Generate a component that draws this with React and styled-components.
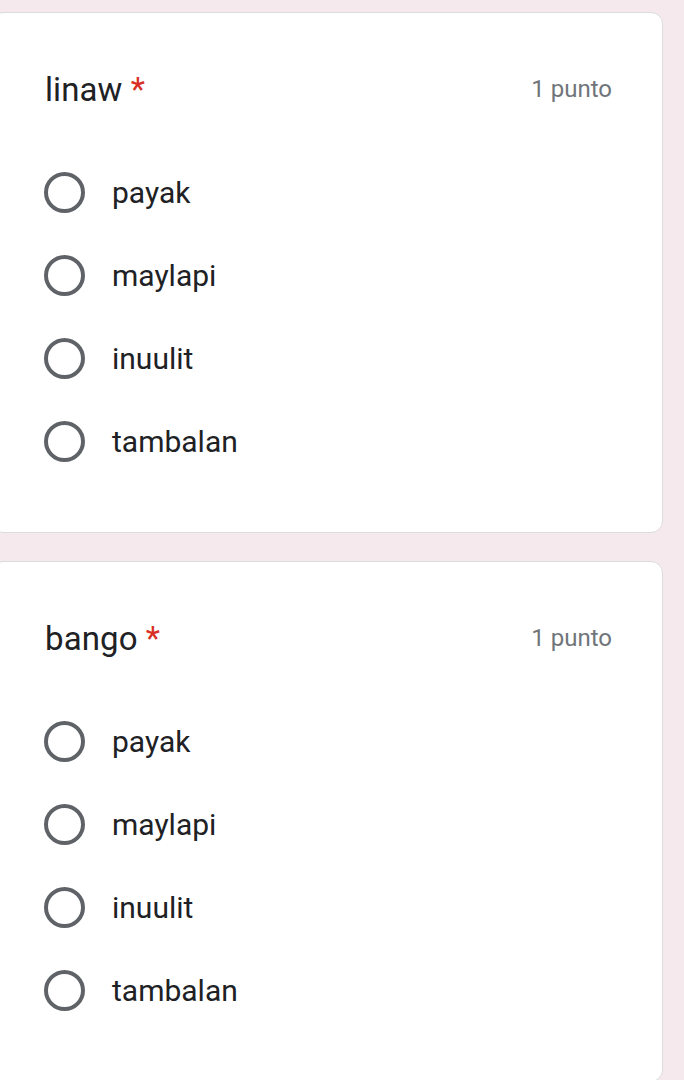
import React from "react";
import styled, { createGlobalStyle } from "styled-components";

const GlobalStyle = createGlobalStyle`
  html, body {
    margin: 0;
    padding: 0;
    background: #f6e9ee;
    font-family: Roboto, "Noto Sans", Arial, sans-serif;
  }
`;

const questions = [
  { id: 1, title: "linaw", points: "1 punto", options: ["payak", "maylapi", "inuulit", "tambalan"] },
  { id: 2, title: "bango", points: "1 punto", options: ["payak", "maylapi", "inuulit", "tambalan"] },
];

const App = () => {
  return (
    <>
      <GlobalStyle />
      <Page>
        {questions.map((q) => (
          <Card key={q.id}>
            <Header>
              <Title>
                {q.title} <Required>*</Required>
              </Title>
              <Points>{q.points}</Points>
            </Header>
            <Options>
              {q.options.map((opt) => (
                <Option key={opt}>
                  <Radio />
                  <Label>{opt}</Label>
                </Option>
              ))}
            </Options>
          </Card>
        ))}
      </Page>
    </>
  );
};

export default App;

const Page = styled.div`
  display: flex;
  flex-direction: column;
  gap: 28px;
  padding-top: 12px;
  margin-left: -9px;
  width: 672px;
  height: 1068px;
  overflow: hidden;
`;

const Card = styled.div`
  flex-shrink: 0;
  box-sizing: border-box;
  height: 521px;
  background: #fff;
  border: 1px solid #dadce0;
  border-radius: 12px;
  padding: 52px 50px 0 53px;
`;

const Header = styled.div`
  display: flex;
  align-items: center;
  justify-content: space-between;
  height: 48px;
`;

const Title = styled.div`
  font-size: 33px;
  color: #202124;
  letter-spacing: 0.1px;
`;

const Required = styled.span`
  color: #d93025;
`;

const Points = styled.div`
  font-size: 24px;
  color: #70757a;
`;

const Options = styled.div`
  display: flex;
  flex-direction: column;
  margin-top: 38px;
`;

const Option = styled.div`
  display: flex;
  align-items: center;
  height: 83px;
  gap: 27px;
`;

const Radio = styled.div`
  box-sizing: border-box;
  width: 41px;
  height: 41px;
  margin-left: -1px;
  border: 4px solid #5f6368;
  border-radius: 50%;
  flex-shrink: 0;
`;

const Label = styled.div`
  font-size: 30px;
  color: #202124;
`;
